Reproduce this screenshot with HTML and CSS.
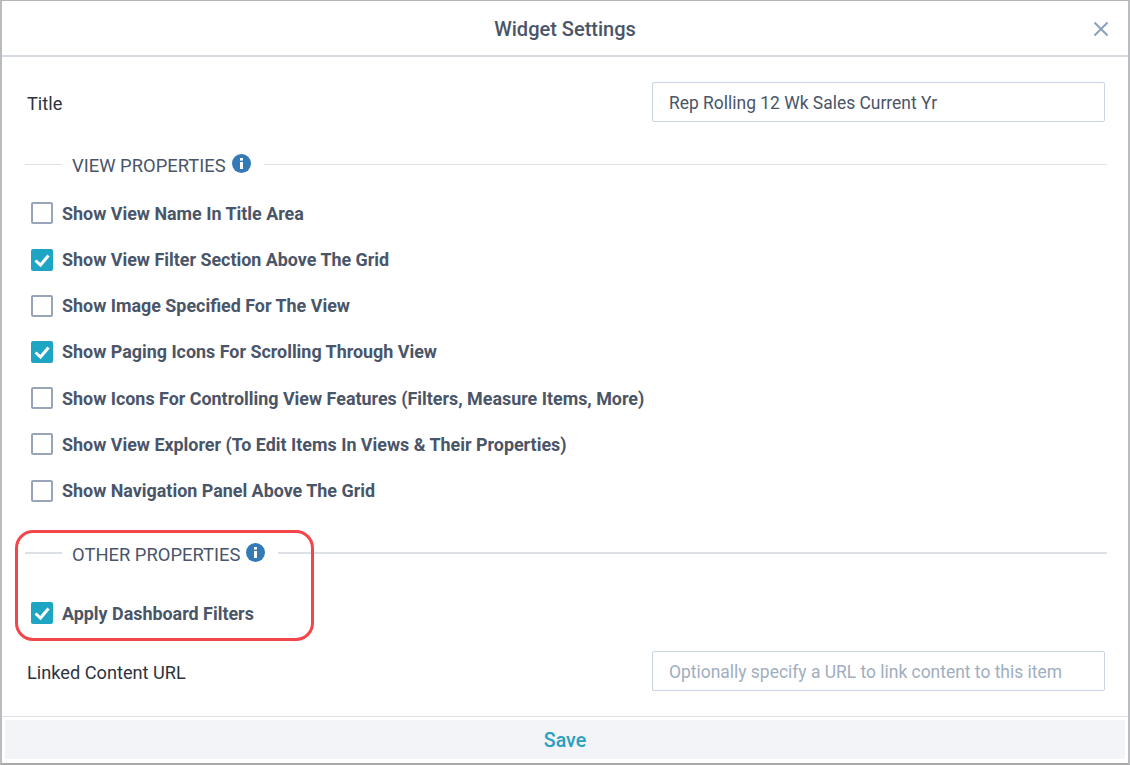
FILE: index.html
```html
<!DOCTYPE html>
<html lang="en">
<head>
    <meta charset="UTF-8">
    <title>Widget Settings</title>
    <link rel="stylesheet" href="styles.css">
</head>
<body>
  <div class="modal">
      <div class="modal-header">
          <h2 class="modal-title">Widget Settings</h2>
          <svg class="close-icon" width="16" height="16" viewBox="0 0 16 16">
              <path d="M1.5 1.5 L14.5 14.5 M14.5 1.5 L1.5 14.5" stroke="#8aa0bb" stroke-width="2" fill="none"/>
          </svg>
      </div>
      <div class="modal-body">
          <div class="field-row title-row">
              <label class="field-label">Title</label>
              <input class="field-input" type="text" value="Rep Rolling 12 Wk Sales Current Yr">
          </div>

          <div class="section-head view-head">
              <span class="section-line short"></span>
              <span class="section-name">VIEW PROPERTIES</span>
              <svg class="info-icon" width="19" height="19" viewBox="0 0 19 19">
                  <circle cx="9.5" cy="9.5" r="9.5" fill="#337ab7"/>
                  <rect x="8" y="8" width="3" height="7" fill="#fff"/>
                  <rect x="8" y="4" width="3" height="2.6" fill="#fff"/>
              </svg>
              <span class="section-line long"></span>
          </div>

          <div class="check-list">
              <div class="check-row"><span class="check-box"></span><span class="check-text">Show View Name In Title Area</span></div>
              <div class="check-row"><span class="check-box checked"><svg width="22" height="22" viewBox="0 0 22 22"><path d="M4.5 11.5 L9.5 16 L17.5 6.5" stroke="#fff" stroke-width="3" fill="none"/></svg></span><span class="check-text">Show View Filter Section Above The Grid</span></div>
              <div class="check-row"><span class="check-box"></span><span class="check-text">Show Image Specified For The View</span></div>
              <div class="check-row"><span class="check-box checked"><svg width="22" height="22" viewBox="0 0 22 22"><path d="M4.5 11.5 L9.5 16 L17.5 6.5" stroke="#fff" stroke-width="3" fill="none"/></svg></span><span class="check-text">Show Paging Icons For Scrolling Through View</span></div>
              <div class="check-row"><span class="check-box"></span><span class="check-text">Show Icons For Controlling View Features (Filters, Measure Items, More)</span></div>
              <div class="check-row"><span class="check-box"></span><span class="check-text">Show View Explorer (To Edit Items In Views &amp; Their Properties)</span></div>
              <div class="check-row"><span class="check-box"></span><span class="check-text">Show Navigation Panel Above The Grid</span></div>
          </div>

          <div class="section-head other-head">
              <span class="section-line short thick"></span>
              <span class="section-name">OTHER PROPERTIES</span>
              <svg class="info-icon" width="19" height="19" viewBox="0 0 19 19">
                  <circle cx="9.5" cy="9.5" r="9.5" fill="#337ab7"/>
                  <rect x="8" y="8" width="3" height="7" fill="#fff"/>
                  <rect x="8" y="4" width="3" height="2.6" fill="#fff"/>
              </svg>
              <span class="section-line long thick"></span>
          </div>

          <div class="check-row apply-row"><span class="check-box checked"><svg width="22" height="22" viewBox="0 0 22 22"><path d="M4.5 11.5 L9.5 16 L17.5 6.5" stroke="#fff" stroke-width="3" fill="none"/></svg></span><span class="check-text">Apply Dashboard Filters</span></div>

          <div class="field-row url-row">
              <label class="field-label">Linked Content URL</label>
              <input class="field-input" type="text" placeholder="Optionally specify a URL to link content to this item">
          </div>
      </div>
      <div class="modal-footer">
          <button class="save-btn">Save</button>
      </div>
      <div class="callout"></div>
  </div>
</body>
</html>
```

FILE: styles.css
```css
/* General */
*
{
    box-sizing: border-box;
    margin: 0;
    padding: 0;
    font-family: Roboto, "Liberation Sans", sans-serif;
}
html,
body
{
    width: 1130px;
    height: 765px;
    overflow: hidden;
    background-color: #fff;
}

/* Modal frame */
.modal
{
    position: relative;
    width: 1130px;
    height: 765px;
    display: flex;
    flex-direction: column;
    background-color: #fff;
    border-top: 1px solid #b4b4b4;
    border-left: 2px solid #b9bcc0;
    border-right: 2px solid #b9bcc0;
    border-bottom: 2px solid #a8a8a8;
}
.modal-header
{
    position: relative;
    height: 56px;
    flex-shrink: 0;
    display: flex;
    align-items: center;
    justify-content: center;
    padding-top: 2px;
    border-bottom: 2px solid #d6dbe1;
}
.modal-title
{
    font-size: 20px;
    font-weight: 500;
    color: #4a5568;
}
.close-icon
{
    position: absolute;
    right: 19px;
    top: 20px;
}

/* Body */
.modal-body
{
    flex: 1;
    padding: 0 23px 0 23px;
    border-bottom: 1px solid #dde1e6;
}
.field-row
{
    display: flex;
    align-items: center;
    justify-content: space-between;
}
.title-row
{
    margin-top: 25px;
}
.url-row
{
    margin-top: 15px;
}
.field-label
{
    padding: 2px 0 0 2px;
    font-size: 18.2px;
    color: #2d3340;
}
.field-input
{
    width: 453px;
    height: 40px;
    padding: 2px 16px 0;
    font-size: 17.45px;
    color: #4a5568;
    background-color: #fff;
    border: 1px solid #c8d5e3;
    border-radius: 2px;
    outline: none;
}
.field-input::placeholder
{
    color: #a0aec0;
    opacity: 1;
}

/* Section headings */
.section-head
{
    display: flex;
    align-items: center;
    height: 24px;
    margin-right: -2px;
}
.view-head
{
    margin-top: 30px;
}
.other-head
{
    margin-top: 27.7px;
}
.section-line
{
    height: 1px;
    background-color: #dde1e6;
}
.section-line.thick
{
    height: 2px;
}
.section-line.short
{
    width: 37px;
}
.section-line.long
{
    flex: 1;
}
.section-name
{
    margin: 2px 6px 0 10px;
    font-size: 18.4px;
    color: #4a5568;
}
.info-icon
{
    margin: -2px 13px 0 0;
}

/* Checkboxes */
.check-list
{
    margin-top: 14.3px;
}
.check-row
{
    display: flex;
    align-items: center;
    height: 46.2px;
    padding-left: 6px;
}
.apply-row
{
    margin-top: 25px;
}
.check-box
{
    width: 22px;
    height: 22px;
    flex-shrink: 0;
    margin-right: 9px;
    background-color: #fff;
    border: 2px solid #98a5b8;
    border-radius: 2px;
}
.check-box.checked
{
    background-color: #1ea5c4;
    border: 0;
}
.check-box svg
{
    display: block;
}
.check-text
{
    font-size: 17.9px;
    font-weight: 700;
    color: #4a5568;
}

/* Footer */
.modal-footer
{
    height: 46px;
    flex-shrink: 0;
    padding: 3px 3px 4px;
}
.save-btn
{
    width: 100%;
    height: 100%;
    padding-top: 2px;
    font-size: 19.6px;
    font-weight: 500;
    color: #2a9fc0;
    background-color: #f2f4f8;
    border: 0;
    border-radius: 2px;
}

/* Red highlight drawn over the other properties section */
.callout
{
    position: absolute;
    left: 13px;
    top: 529px;
    width: 299px;
    height: 111px;
    border: 3px solid #f4454b;
    border-radius: 18px;
}
```
